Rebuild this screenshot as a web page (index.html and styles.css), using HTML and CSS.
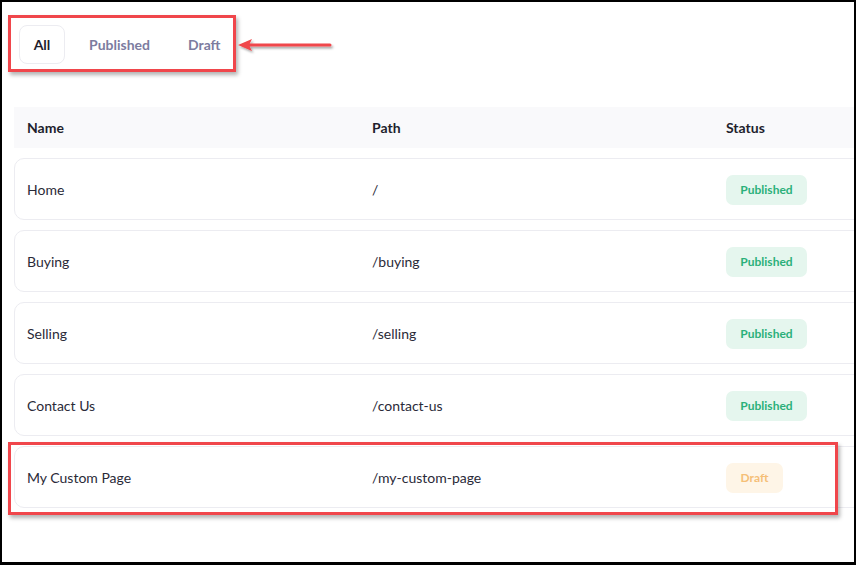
FILE: index.html
```html
<!DOCTYPE html>
<html lang="en">
<head>
<meta charset="utf-8">
<title>Pages</title>
<link rel="stylesheet" href="styles.css">
</head>
<body>
<div class="frame">
  <div class="tabs">
    <div class="tab active">All</div>
    <div class="tab">Published</div>
    <div class="tab">Draft</div>
  </div>

  <div class="table">
    <div class="head">
      <div class="cell">Name</div>
      <div class="cell">Path</div>
      <div class="cell">Status</div>
    </div>
    <div class="row">
      <div class="cell">Home</div>
      <div class="cell">/</div>
      <div class="cell"><span class="badge published">Published</span></div>
    </div>
    <div class="row">
      <div class="cell">Buying</div>
      <div class="cell">/buying</div>
      <div class="cell"><span class="badge published">Published</span></div>
    </div>
    <div class="row">
      <div class="cell">Selling</div>
      <div class="cell">/selling</div>
      <div class="cell"><span class="badge published">Published</span></div>
    </div>
    <div class="row">
      <div class="cell">Contact Us</div>
      <div class="cell">/contact-us</div>
      <div class="cell"><span class="badge published">Published</span></div>
    </div>
    <div class="row">
      <div class="cell">My Custom Page</div>
      <div class="cell">/my-custom-page</div>
      <div class="cell"><span class="badge draft">Draft</span></div>
    </div>
  </div>

  <div class="mark mark-tabs"></div>
  <svg class="arrow" width="100" height="20" viewBox="0 0 100 20" aria-hidden="true">
    <defs>
      <filter id="sh" x="-10%" y="-50%" width="130%" height="250%">
        <feDropShadow dx="1.5" dy="2" stdDeviation="1.2" flood-color="#000" flood-opacity="0.35"/>
      </filter>
    </defs>
    <g filter="url(#sh)">
      <line x1="12" y1="9" x2="94" y2="9" stroke="#f0464b" stroke-width="3" stroke-linecap="round"/>
      <polygon points="2,9 16,3 13,9 16,15" fill="#f0464b"/>
    </g>
  </svg>
  <div class="mark mark-row"></div>
</div>
</body>
</html>
```

FILE: styles.css
```css
* { box-sizing: border-box; }

html, body {
  margin: 0;
  padding: 0;
  background: #ffffff;
}

body {
  font-family: Lato, "Noto Sans", "Liberation Sans", sans-serif;
  color: #2b2b3a;
}

.frame {
  position: relative;
  width: 856px;
  height: 565px;
  border-style: solid;
  border-color: #000;
  border-width: 2px 2px 3px 2px;
  overflow: hidden;
  background: #fff;
}

.tabs {
  display: flex;
  gap: 10px;
  margin: 23px 0 0 17px;
  height: 39px;
}

.tab {
  display: flex;
  align-items: center;
  padding: 0 13px;
  height: 39px;
  font-size: 14px;
  font-weight: 700;
  color: #7c7c9f;
  border: 1px solid transparent;
  border-radius: 8px;
}

.tab.active {
  color: #1e1e2c;
  border-color: #ececf1;
  width: 46px;
  justify-content: center;
  padding: 0;
}

.table {
  margin: 43px 0 0 12px;
  width: 880px;
  display: flex;
  flex-direction: column;
  gap: 11px;
}

.head,
.row {
  display: grid;
  grid-template-columns: 345px 354px 1fr;
  align-items: center;
}

.head {
  height: 41px;
  background: #f9f9fb;
  padding-left: 13px;
  font-size: 14px;
  font-weight: 700;
  color: #1f1f2d;
  margin-bottom: -1px;
}

.row {
  height: 62px;
  border: 1px solid #ececf1;
  border-radius: 10px;
  padding-left: 12px;
  padding-top: 1px;
  font-size: 14px;
  color: #2a2a38;
}

.row + .row {
  margin-top: -1px;
}

.badge {
  display: inline-flex;
  align-items: center;
  justify-content: center;
  height: 30px;
  border-radius: 7px;
  font-size: 12px;
  font-weight: 700;
}

.badge.published {
  width: 81px;
  background: #e5f6ee;
  color: #2bb07a;
}

.badge.draft {
  width: 57px;
  background: #fef5e7;
  color: #f5bf78;
}

.mark {
  position: absolute;
  border: 3px solid #f0464b;
  box-shadow: 2px 3px 4px rgba(0, 0, 0, 0.3);
}

.mark-tabs {
  left: 6px;
  top: 13px;
  width: 228px;
  height: 57px;
}

.mark-row {
  left: 6px;
  top: 440px;
  width: 830px;
  height: 73px;
}

.arrow {
  position: absolute;
  left: 234px;
  top: 34px;
}
```
